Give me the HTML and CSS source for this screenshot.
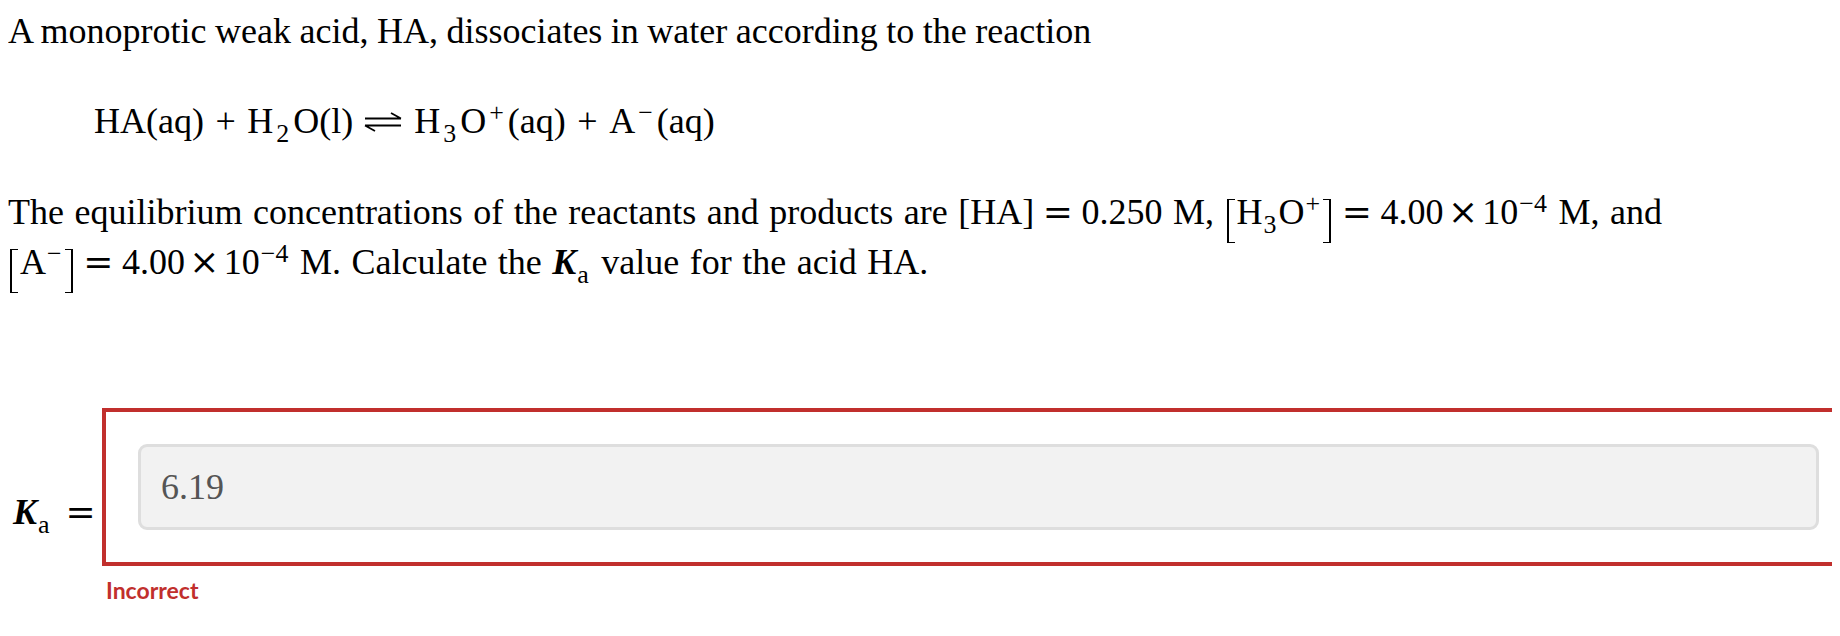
FILE: index.html
```html
<!DOCTYPE html>
<html lang="en">
<head>
<meta charset="utf-8">
<title>Weak acid Ka</title>
<link rel="stylesheet" href="styles.css">
</head>
<body>
<div class="question">
  <p class="line intro">A monoprotic weak acid, HA, dissociates in water according to the reaction</p>
  <p class="line equation">HA(aq)<span class="op">+</span>H<span class="sub">2</span>O(l)<svg class="eqarrow" width="38" height="20" viewBox="0 0 38 20"><path d="M1 6.5H37M37 6.5L27 1M37 13.5H1M1 13.5L11 19" fill="none" stroke="#000" stroke-width="1.8"/></svg>H<span class="sub">3</span>O<span class="sup">+</span>(aq)<span class="op">+</span>A<span class="sup">−</span>(aq)</p>
  <p class="line body">The equilibrium concentrations of the reactants and products are [HA]<span class="rel">=</span>0.250 M, <span class="lb"></span>H<span class="sub">3</span>O<span class="sup">+</span><span class="rb"></span><span class="rel">=</span>4.00<span class="bin">×</span>10<span class="sup">−4</span> M, and<br><span class="lb"></span>A<span class="sup">−</span><span class="rb"></span><span class="rel">=</span>4.00<span class="bin">×</span>10<span class="sup">−4</span> M. Calculate the <b class="kvar">K</b><span class="sub">a</span> value for the acid HA.</p>
  <div class="answer">
    <div class="label"><b class="kvar">K</b><span class="sub">a</span><span class="rel">=</span></div>
    <div class="field">
      <div class="box">
        <div class="input">6.19</div>
      </div>
      <div class="feedback">Incorrect</div>
    </div>
  </div>
</div>
</body>
</html>
```

FILE: styles.css
```css
html, body {
  overflow: hidden;
}
body {
  margin: 7px 8px 8px 8px;
  background: #fff;
  color: #000;
  font-family: "Liberation Serif", "Times New Roman", serif;
  font-size: 36px;
  line-height: 48px;
}
.line {
  margin: 0;
  white-space: nowrap;
}
.intro {
  word-spacing: -0.5px;
}
.equation {
  margin-top: 42px;
  padding-left: 86px;
}
.body {
  margin-top: 42px;
  line-height: 49px;
  word-spacing: 1.5px;
}
.sub {
  font-size: 0.72em;
  line-height: 0;
  vertical-align: -0.34em;
  padding: 0 4px 0 3px;
}
.sup {
  font-size: 0.72em;
  line-height: 0;
  vertical-align: 0.45em;
  padding: 0 1px;
}
.equation .sup {
  padding: 0 4px 0 3px;
}
.body .sub {
  padding: 0 2px 0 1px;
}
.op {
  padding: 0 0.32em;
}
.rel {
  font-family: "DejaVu Serif", serif;
  padding: 0 0.24em;
}
.bin {
  font-family: "DejaVu Serif", serif;
  padding: 0 0.12em;
}
.eqarrow {
  margin: 0 12px 0 11px;
  vertical-align: 1px;
}
.lb, .rb {
  display: inline-block;
  box-sizing: border-box;
  width: 8px;
  height: 44px;
  margin: -21px 2px -21px 2px;
  vertical-align: 2px;
  border: 0 solid #000;
  border-width: 1.5px 0 1.5px 2px;
}
.rb {
  border-width: 1.5px 2px 1.5px 0;
  margin: -21px 2px -21px 2px;
}
.kvar {
  font-style: italic;
  font-weight: bold;
}
.answer {
  margin-top: 121px;
  display: flex;
  align-items: center;
}
.label {
  flex: none;
  box-sizing: border-box;
  width: 94px;
  padding-left: 5px;
  white-space: nowrap;
}
.label .sub {
  padding: 0 1px;
}
.label .rel {
  padding: 0 0 0 15px;
}
.field {
  flex: none;
  width: 1753px;
}
.box {
  border: 4px solid #c12f2d;
  padding: 32px;
}
.input {
  height: 80px;
  border: 3px solid #dedede;
  border-radius: 9px;
  background: #f2f2f2;
  padding-left: 20px;
  display: flex;
  align-items: center;
  color: #555;
  font-size: 36px;
}
.feedback {
  margin: 11px 0 13px 4px;
  font-family: Lato, "Liberation Sans", sans-serif;
  font-weight: bold;
  font-size: 23px;
  line-height: 26px;
  color: #c12f2d;
}
```
